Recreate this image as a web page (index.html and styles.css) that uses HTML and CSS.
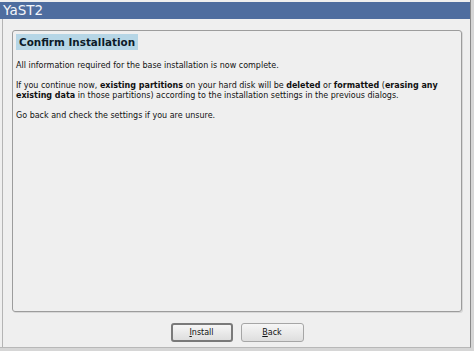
FILE: index.html
```html
<!DOCTYPE html>
<html lang="en">
  <head>
    <meta charset="UTF-8" />
    <title>YaST2</title>
    <link rel="stylesheet" href="styles.css">
  </head>
  <body>
    <div class="window">
      <div class="titlebar">YaST2</div>
      <div class="frame">
        <div class="panel">
          <h1 class="heading">Confirm Installation</h1>
          <p>All information required for the base installation is now complete.</p>
          <p>If you continue now, <b>existing partitions</b> on your hard disk will be <b>deleted</b> or <b>formatted</b> (<b>erasing any existing data</b> in those partitions) according to the installation settings in the previous dialogs.</p>
          <p>Go back and check the settings if you are unsure.</p>
        </div>
        <div class="buttons">
          <button class="btn default"><u>I</u>nstall</button>
          <button class="btn"><u>B</u>ack</button>
        </div>
      </div>
    </div>
  </body>
</html>
```
FILE: styles.css
```css
body {
  margin: 0;
  width: 474px;
  height: 351px;
  overflow: hidden;
  background-color: #d6d6d6;
  font-family: "DejaVu Sans", sans-serif;
}

.window {
  display: flex;
  flex-direction: column;
  height: 348px;
  width: 471px;
  padding-top: 2px;
  box-sizing: border-box;
  background-color: #efefef;
  border-right: 1px solid #8a8a8a;
  border-bottom: 1px solid #b8b8b8;
}

.titlebar {
  height: 17px;
  line-height: 17px;
  padding-left: 3px;
  background-color: #4e6d9f;
  color: #f4f6fa;
  font-size: 13.5px;
}

.frame {
  flex: 1;
  display: flex;
  flex-direction: column;
  margin-left: 2px;
  border-left: 1px solid #b4b4b4;
  padding: 11px 8px 0 9px;
}

.panel {
  flex: 1;
  border: 1px solid #9c9c9c;
  border-radius: 3px;
  box-shadow: 1px 1px 0 #d8d8d8;
  padding: 3px 3px 0 3px;
  color: #111;
  font-size: 8px;
}

.heading {
  width: fit-content;
  margin: 0 0 11px 0;
  padding: 0 3px;
  height: 16px;
  line-height: 16px;
  background-color: #b6d6e6;
  color: #0c1a28;
  font-size: 10.4px;
  font-weight: bold;
}

.panel p {
  margin: 0 0 10px 0;
  line-height: 10px;
}

.buttons {
  display: flex;
  justify-content: center;
  align-items: flex-start;
  gap: 8px;
  height: 35px;
  box-sizing: border-box;
  padding-top: 11px;
}

.btn {
  width: 63px;
  height: 19px;
  padding: 0;
  font-family: "DejaVu Sans", sans-serif;
  font-size: 8px;
  color: #111;
  background: linear-gradient(#f6f6f6, #dedede);
  border: 1px solid #a6a6a6;
  border-radius: 3px;
}

.default {
  border: 2px solid #7a7a7a;
  width: 62px;
}
```
